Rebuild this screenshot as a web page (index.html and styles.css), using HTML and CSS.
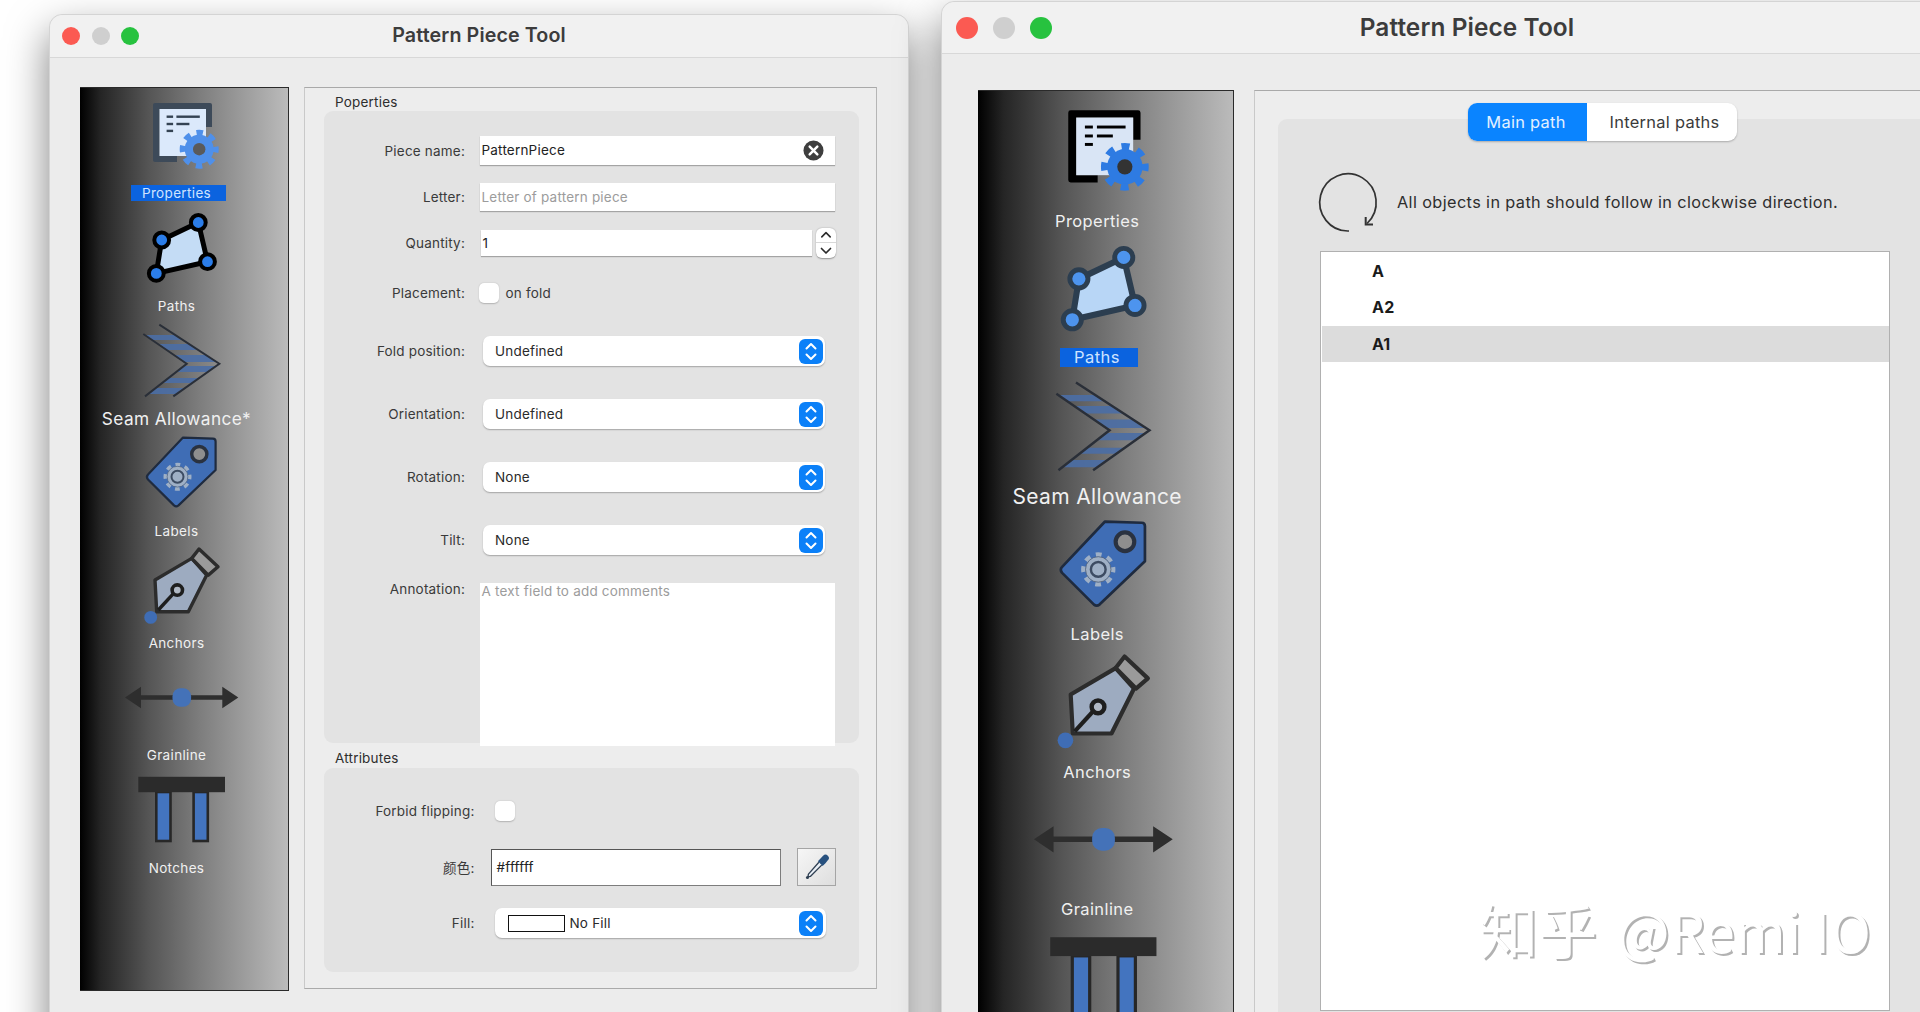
FILE: index.html
```html
<!DOCTYPE html>
<html lang="en">
<head>
<meta charset="utf-8">
<title>Pattern Piece Tool</title>
<link rel="stylesheet" href="styles.css">
</head>
<body>
<svg class="sprite" xmlns="http://www.w3.org/2000/svg">
  <symbol id="ic-props" viewBox="0 0 130 88">
    <path class="p-frame" d="M43 10H98a2 2 0 0 1 2 2V34H94V16H47.5V63H65V69H43a2 2 0 0 1-2-2V12a2 2 0 0 1 2-2Z"/>
    <rect class="p-page" x="47.5" y="16" width="46.5" height="47"/>
    <g class="p-lines">
      <rect x="54.6" y="22.5" width="6.5" height="2.4"/><rect x="64.4" y="22.5" width="23.4" height="2.4"/>
      <rect x="54.6" y="29.8" width="6.5" height="2.4"/><rect x="64.4" y="29.8" width="13" height="2.4"/>
      <rect x="54.6" y="36.7" width="6.5" height="2.4"/>
    </g>
    <circle class="p-gear" cx="87.2" cy="56.2" r="14.5"/>
    <circle class="p-teeth" cx="87.2" cy="56.2" r="16.5"/>
    <circle class="p-hole" cx="87.2" cy="56.2" r="6.2"/>
  </symbol>
  <symbol id="ic-paths" viewBox="0 0 130 88">
    <polygon class="q-shape" points="49.7,35 86.3,17.5 95.5,56.7 44.3,68.4"/>
    <g class="q-node">
      <circle cx="49.7" cy="35" r="7.4"/><circle cx="86.3" cy="17.5" r="7.4"/>
      <circle cx="95.5" cy="56.7" r="7.4"/><circle cx="44.3" cy="68.4" r="7.4"/>
    </g>
  </symbol>
  <symbol id="ic-seam" viewBox="0 0 130 88">
    <g class="s-band">
      <polygon points="33,18 63,18 71,23 40,23"/><polygon points="46,27 77,27 86,33 55,33"/>
      <polygon points="62,38 94,38 105,45 72,45"/><polygon points="72,49 104,49 96,55 64,55"/>
      <polygon points="56,61 87,61 80,66 50,66"/><polygon points="44,71 73,71 65,77 36,77"/>
    </g>
    <path class="s-line" d="M47.3 7.7 107.3 46.7 61.3 79.4M31.3 17 74.7 46.7 33 79.4"/>
  </symbol>
  <symbol id="ic-labels" viewBox="0 0 130 88">
    <path class="l-tag" d="M71 8.6 101 9.6Q103.6 9.7 103.6 12.5V41L66.5 76.4Q64.2 78.2 62 76.4L36 50.5Q33.8 47.7 36 45.6Z"/>
    <circle class="l-hole" cx="87.3" cy="25.1" r="7.6"/>
    <circle class="l-teeth" cx="65.5" cy="47.7" r="12.2"/>
    <circle class="l-gear" cx="65.5" cy="47.7" r="10.4"/>
    <circle class="l-core" cx="65.5" cy="47.7" r="6"/>
  </symbol>
  <symbol id="ic-anchors" viewBox="0 0 130 88">
    <polygon class="a-nib" points="43,38 79.7,16.4 94.7,33.1 76.3,69.8 44.7,69.8"/>
    <polygon class="a-cap" points="87,7 106,24.8 96.3,33.1 79.7,16.4"/>
    <path class="a-slit" d="M46.3 68 63 49.8"/>
    <circle class="a-eye" cx="65.3" cy="48.1" r="5.2"/>
    <circle class="a-dot" cx="38.7" cy="75.4" r="6.4"/>
  </symbol>
  <symbol id="ic-grain" viewBox="0 0 130 88">
    <path class="g-arrow" d="M13 43.5 29 32.8V41.2H110.3V32.8L126.3 43.5 110.3 54.2V45.8H29V54.2Z"/>
    <rect class="g-dot" x="60.5" y="34.2" width="18.6" height="18.6" rx="8"/>
  </symbol>
  <symbol id="ic-notch" viewBox="0 0 130 88">
    <rect class="n-leg" x="44.3" y="26" width="14.2" height="49"/>
    <rect class="n-leg" x="81.6" y="26" width="14.2" height="49"/>
    <rect class="n-bar" x="26.3" y="10.8" width="86.7" height="15.4"/>
  </symbol>
  <symbol id="ic-updown" viewBox="0 0 24 25">
    <path d="M7.5 9.5 12 5l4.5 4.5M7.5 15.5 12 20l4.5-4.5"/>
  </symbol>
</svg>

<main class="desktop">
  <section class="window window-a">
    <header class="titlebar">
      <span class="light light-red"></span><span class="light light-grey"></span><span class="light light-green"></span>
      <h1 class="title">Pattern Piece Tool</h1>
    </header>
    <div class="content">
      <nav class="sidebar">
        <div class="item selected"><svg class="icon"><use href="#ic-props"/></svg><span class="label"><span class="bar">Properties</span></span></div>
        <div class="item"><svg class="icon"><use href="#ic-paths"/></svg><span class="label">Paths</span></div>
        <div class="item"><svg class="icon"><use href="#ic-seam"/></svg><span class="label label-big">Seam Allowance*</span></div>
        <div class="item"><svg class="icon"><use href="#ic-labels"/></svg><span class="label">Labels</span></div>
        <div class="item"><svg class="icon"><use href="#ic-anchors"/></svg><span class="label">Anchors</span></div>
        <div class="item"><svg class="icon"><use href="#ic-grain"/></svg><span class="label">Grainline</span></div>
        <div class="item"><svg class="icon"><use href="#ic-notch"/></svg><span class="label">Notches</span></div>
      </nav>
      <div class="panel">
        <div class="legend">Poperties</div>
        <div class="group group-props">
          <div class="row row-name">
            <label class="lab">Piece name:</label>
            <div class="field field-wide"><span>PatternPiece</span>
              <svg class="clear" viewBox="0 0 22 22"><circle cx="11" cy="11" r="10.5"/><path d="M7 7l8 8M15 7l-8 8"/></svg>
            </div>
          </div>
          <div class="row row-letter">
            <label class="lab">Letter:</label>
            <div class="field field-wide field-letter ph">Letter of pattern piece</div>
          </div>
          <div class="row row-qty">
            <label class="lab">Quantity:</label>
            <div class="field field-qty">1</div>
            <div class="stepper">
              <svg viewBox="0 0 20 15"><path d="M5.5 9.5 10 5l4.5 4.5"/></svg>
              <svg viewBox="0 0 20 15"><path d="M5.5 5.5 10 10l4.5-4.5"/></svg>
            </div>
          </div>
          <div class="row row-place">
            <label class="lab">Placement:</label>
            <span class="check check-fold"></span><span class="on-fold">on fold</span>
          </div>
          <div class="row row-select row-first">
            <label class="lab">Fold position:</label>
            <div class="select"><span>Undefined</span><span class="sel-btn"><svg><use href="#ic-updown"/></svg></span></div>
          </div>
          <div class="row row-select">
            <label class="lab">Orientation:</label>
            <div class="select"><span>Undefined</span><span class="sel-btn"><svg><use href="#ic-updown"/></svg></span></div>
          </div>
          <div class="row row-select">
            <label class="lab">Rotation:</label>
            <div class="select"><span>None</span><span class="sel-btn"><svg><use href="#ic-updown"/></svg></span></div>
          </div>
          <div class="row row-select">
            <label class="lab">Tilt:</label>
            <div class="select"><span>None</span><span class="sel-btn"><svg><use href="#ic-updown"/></svg></span></div>
          </div>
          <div class="row row-note">
            <label class="lab">Annotation:</label>
            <div class="note ph">A text field to add comments</div>
          </div>
        </div>
        <div class="legend legend-attr">Attributes</div>
        <div class="group group-attr">
          <div class="row row-flip">
            <label class="lab lab-attr">Forbid flipping:</label>
            <span class="check check-flip"></span>
          </div>
          <div class="row row-color">
            <label class="lab lab-attr">颜色:</label>
            <div class="color-input">#ffffff</div>
            <div class="dropper">
              <svg viewBox="0 0 38 38"><path class="drop-glass" d="M22 14 11 26.5 10.5 29.5 13 29 25 17"/><path class="drop-bulb" d="M21 13 26 18 29 15 31.5 12a2.6 2.6 0 0 0-5-5Z"/><circle class="drop-tip" cx="10" cy="30" r="1.6"/></svg>
            </div>
          </div>
          <div class="row row-fill">
            <label class="lab lab-attr">Fill:</label>
            <div class="select select-fill"><span class="swatch"></span><span class="fill-text">No Fill</span><span class="sel-btn"><svg><use href="#ic-updown"/></svg></span></div>
          </div>
        </div>
      </div>
    </div>
  </section>

  <section class="window window-b">
    <header class="titlebar">
      <span class="light light-red"></span><span class="light light-grey"></span><span class="light light-green"></span>
      <h1 class="title">Pattern Piece Tool</h1>
    </header>
    <div class="content">
      <nav class="sidebar">
        <div class="item"><svg class="icon"><use href="#ic-props"/></svg><span class="label">Properties</span></div>
        <div class="item selected"><svg class="icon"><use href="#ic-paths"/></svg><span class="label"><span class="bar">Paths</span></span></div>
        <div class="item"><svg class="icon"><use href="#ic-seam"/></svg><span class="label label-big">Seam Allowance</span></div>
        <div class="item"><svg class="icon"><use href="#ic-labels"/></svg><span class="label">Labels</span></div>
        <div class="item"><svg class="icon"><use href="#ic-anchors"/></svg><span class="label">Anchors</span></div>
        <div class="item"><svg class="icon"><use href="#ic-grain"/></svg><span class="label">Grainline</span></div>
        <div class="item"><svg class="icon"><use href="#ic-notch"/></svg></div>
      </nav>
      <div class="panel">
        <div class="group group-path">
          <div class="tabs"><span class="tab tab-on">Main path</span><span class="tab tab-off">Internal paths</span></div>
          <div class="hint">
            <svg class="cw" viewBox="0 0 58 59"><path d="M29 58A28.2 28.6 0 1 1 47 50.5"/><path d="M45.7 44V51.5H53" class="cw-head"/></svg>
            <span>All objects in path should follow in clockwise direction.</span>
          </div>
          <div class="list">
            <div class="list-row">A</div>
            <div class="list-row">A2</div>
            <div class="list-row list-row-on">A1</div>
            <div class="mark"><span class="mark-cn" data-text="知乎">知乎</span><span class="mark-en" data-text="@Remi IO">@Remi IO</span></div>
          </div>
        </div>
      </div>
    </div>
  </section>
</main>
</body>
</html>
```

FILE: styles.css
```css
* { box-sizing: border-box; }
html, body { margin: 0; height: 1012px; overflow: hidden; background: #fff; }
body {
  font-family: Inter, "Noto Sans CJK SC", "Liberation Sans", sans-serif;
  font-size: 13.5px;
  letter-spacing: 0.2px;
  color: #3a3a3a;
}
.sprite { display: none; }
.desktop { position: relative; width: 1920px; height: 1012px; overflow: hidden; }

/* Windows on the desktop */
.window {
  position: absolute;
  background: #ececec;
  border: 1px solid #d4d4d4;
  border-radius: 13px 13px 0 0;
  box-shadow: 0 18px 42px rgba(0, 0, 0, 0.5);
}
.window-a { left: 49px; top: 14px; width: 860px; height: 1060px; }
.window-b { left: 941px; top: 1px; width: 1100px; height: 1080px; }

.titlebar {
  display: flex;
  align-items: center;
  position: relative;
  background: #f1f1f1;
  border-bottom: 1px solid #d8d8d8;
  border-radius: 13px 13px 0 0;
}
.window-a .titlebar { height: 43px; padding-left: 12px; gap: 11.5px; }
.window-b .titlebar { height: 52px; padding-left: 14px; gap: 15px; }
.light { border-radius: 50%; flex: none; }
.window-a .light { width: 18px; height: 18px; }
.window-b .light { width: 22px; height: 22px; }
.light-red { background: #fb5a52; }
.light-grey { background: #cfcfcf; }
.light-green { background: #27c23f; }
.title {
  position: absolute;
  margin: 0;
  font-weight: 600;
  color: #3c3c3c;
  white-space: nowrap;
  transform: translate(-50%, -1px);
}
.window-a .title { left: 429px; font-size: 19.7px; letter-spacing: 0.1px; }
.window-b .title { left: 525px; font-size: 24.4px; letter-spacing: 0.1px; }

.content { display: flex; }
.window-a .content { padding: 29px 0 0 30px; gap: 15px; }
.window-b .content { padding: 36px 0 0 36px; gap: 20px; }

/* Sidebar */
.sidebar {
  flex: none;
  display: flex;
  flex-direction: column;
  background: linear-gradient(90deg, #000 0%, #252525 10%, #555 33%, #7e7e7e 58%, #bbb 100%);
  border: 1px solid #2a2a2a;
  border-width: 1.5px 1.5px 1.5px 0;
}
.window-a .sidebar { width: 209px; height: 904px; padding: 4.5px 15px 0 0; }
.window-b .sidebar { width: 256px; height: 1000px; padding: 7px 16.6px 0 0; }
.item { display: flex; flex-direction: column; align-items: center; flex: none; }
.window-a .item { height: 112.3px; }
.window-b .item { height: 137.6px; }
.icon { display: block; flex: none; }
.window-a .icon { width: 130px; height: 88px; }
.window-b .icon { width: 159.3px; height: 107.8px; }
.label { display: block; color: #f0f0f0; white-space: nowrap; text-align: center; padding-top: 1.5px; }
.window-a .label { height: 24.3px; line-height: 24.3px; font-size: 13.5px; letter-spacing: 0.35px; }
.window-b .label { height: 29.8px; line-height: 29.8px; font-size: 16.5px; letter-spacing: 0.4px; }
.window-a .label-big { font-size: 17.3px; letter-spacing: 0.35px; }
.window-b .label-big { font-size: 21px; letter-spacing: 0.35px; }
.item.selected .label { padding-top: 0; }
.bar { display: inline-block; background: #0b63df; color: #cfe4ff; }
.window-a .bar { width: 95px; height: 16px; line-height: 16px; margin-left: 4px; padding-right: 4px; }
.window-b .bar { width: 78px; height: 19px; line-height: 19px; margin-left: 3.5px; padding-right: 4px; }

/* Icon colours, unselected by default */
.item {
  --frame: #000; --page: #d9e5f5; --line: #000; --gear: #2e7be2; --hole: #333;
  --edge: #000; --shape: #c4dcf5; --node: #2b7de9;
}
.window-a .item.selected, .window-b .item.selected {
  --frame: #344353; --page: #dbe9fb; --line: #344353; --gear: #4f90ea; --hole: #5a5a5a;
  --edge: #2c3e50; --shape: #b8d6f6; --node: #4d94ee;
}
.window-a .item.selected { --frame: #3d4a59; }
.p-frame { fill: var(--frame); }
.p-page { fill: var(--page); }
.p-lines { fill: var(--line); }
.p-gear { fill: var(--gear); }
.p-teeth { fill: none; stroke: var(--gear); stroke-width: 6; stroke-dasharray: 6.5 6.46; stroke-dashoffset: 3.25; }
.p-hole { fill: var(--hole); }
.q-shape { fill: var(--shape); stroke: var(--edge); stroke-width: 5; stroke-linejoin: round; }
.q-node circle { fill: var(--node); stroke: var(--edge); stroke-width: 4; }
.s-band { fill: #4b6ea6; opacity: 0.9; }
.s-line { fill: none; stroke: #2a2f38; stroke-width: 2; }
.l-tag { fill: #3f6db5; stroke: #1f2b3f; stroke-width: 2.2; stroke-linejoin: round; }
.l-hole { fill: #8e8e8e; stroke: #2a3240; stroke-width: 3.4; }
.l-teeth { fill: none; stroke: #9fb0c6; stroke-width: 3.6; stroke-dasharray: 4.8 4.78; stroke-dashoffset: 2.4; }
.l-gear { fill: #9fb0c6; stroke: #4a5a72; stroke-width: 0.6; }
.l-core { fill: #9fb0c6; stroke: #3d4c63; stroke-width: 2; }
.a-nib { fill: #9dabc0; stroke: #2c2c2c; stroke-width: 3.4; stroke-linejoin: round; }
.a-cap { fill: #9a9a9a; stroke: #2c2c2c; stroke-width: 3.4; stroke-linejoin: round; }
.a-slit { fill: none; stroke: #1e1e1e; stroke-width: 3.4; }
.a-eye { fill: #b0b8c4; stroke: #1e1e1e; stroke-width: 3.6; }
.a-dot { fill: #3f6db5; }
.g-arrow { fill: #2e2e2e; }
.g-dot { fill: #4472b8; }
.n-leg { fill: #4374bf; stroke: #272727; stroke-width: 2.6; }
.n-bar { fill: #2b2b2b; }

/* Panels and groups */
.panel {
  flex: none;
  background: #ededed;
  border: 1px solid #c9c9c9;
  border-top-color: #a9a9a9;
  border-right-color: #b5b5b5;
  border-bottom-color: #aaa;
}
.window-a .panel { width: 572.5px; height: 902px; padding: 0 17px 0 19px; }
.window-b .panel { width: 900px; height: 1000px; padding: 28px 0 0 23px; }
.legend { height: 23px; line-height: 29px; padding-left: 11px; color: #2e2e2e; }
.legend-attr { height: 25px; line-height: 31px; }
.group { background: #e3e3e3; border-radius: 9px; }
.group-props { height: 632px; padding-top: 25px; }
.group-attr { height: 204px; padding-top: 33px; }
.group-path { display: flow-root; width: 900px; height: 1000px; }

.row { display: flex; align-items: center; }
.lab { flex: none; width: 141px; text-align: right; white-space: nowrap; padding-top: 0.5px; }
.lab-attr { width: 150.5px; }
.row-name { height: 29px; }
.row-letter { height: 28px; margin-top: 18px; }
.row-qty { height: 30px; margin-top: 17px; }
.row-place { height: 20px; margin-top: 25px; }
.row-select { height: 30px; margin-top: 33px; }
.row-note { align-items: flex-start; margin-top: 28px; }
.row-note .lab { line-height: 13px; padding-top: 0; }

.field {
  display: flex;
  align-items: center;
  justify-content: space-between;
  background: #fff;
  color: #222;
  box-shadow: 0 1px 1px rgba(0, 0, 0, 0.28);
  padding-left: 1.5px;
  padding-bottom: 1px;
}
.field-wide { width: 355px; height: 29px; margin-left: 15px; padding-right: 11px; }
.field-letter { height: 28px; padding-bottom: 0; }
.field-qty { width: 331px; height: 25.5px; margin-left: 16px; padding-bottom: 0; }
.ph { color: #9c9c9c; }
.field.ph { color: #9c9c9c; }
.clear { width: 21px; height: 21px; flex: none; }
.clear circle { fill: #3e3e3e; }
.clear path { stroke: #fff; stroke-width: 2.6; stroke-linecap: round; fill: none; }
.stepper {
  width: 20px;
  height: 30px;
  margin-left: 4px;
  background: #fff;
  border-radius: 6px;
  box-shadow: 0 0.5px 1.5px rgba(0, 0, 0, 0.35);
}
.stepper svg { display: block; width: 20px; height: 15px; }
.stepper svg:first-child { border-bottom: 1px solid #d8d8d8; }
.stepper path { fill: none; stroke: #2a2a2a; stroke-width: 1.7; stroke-linecap: round; stroke-linejoin: round; }
.check {
  flex: none;
  width: 20px;
  height: 20px;
  background: #fff;
  border-radius: 5px;
  box-shadow: 0 0.5px 1.5px rgba(0, 0, 0, 0.22);
}
.check-fold { margin-left: 14px; }
.check-flip { margin-left: 20px; }
.on-fold { margin-left: 6.5px; }

.select {
  display: flex;
  align-items: center;
  justify-content: space-between;
  width: 342px;
  height: 30px;
  margin-left: 18px;
  padding: 0 2.5px 0 12px;
  background: #fff;
  color: #2a2a2a;
  border-radius: 7px;
  box-shadow: 0 1px 1.5px rgba(0, 0, 0, 0.28);
}
.sel-btn {
  flex: none;
  width: 24px;
  height: 25px;
  background: #0b80f8;
  border-radius: 6px;
}
.sel-btn svg { display: block; width: 24px; height: 25px; }
.sel-btn svg { fill: none; stroke: #fff; stroke-width: 2; stroke-linecap: round; stroke-linejoin: round; }

.note {
  width: 355px;
  height: 163px;
  margin-left: 15px;
  padding: 1px 0 0 1.5px;
  background: #fff;
  line-height: 14px;
}

.row-flip { height: 20px; }
.row-color { height: 38px; margin-top: 27px; }
.row-fill { height: 30px; margin-top: 22px; }
.color-input {
  width: 290px;
  height: 37px;
  margin-left: 16px;
  padding-left: 5px;
  line-height: 34px;
  background: #fff;
  color: #222;
  border: 1.5px solid #7d7d7d;
  border-top-color: #555;
  border-left-color: #555;
}
.dropper {
  width: 38.5px;
  height: 38px;
  margin-left: 16.5px;
  background: linear-gradient(135deg, #f6f6f6, #dedede);
  border: 1px solid #a5a5a5;
}
.dropper svg { display: block; width: 36px; height: 36px; }
.drop-glass { fill: #e8eef5; stroke: #2f3f52; stroke-width: 1.4; stroke-linejoin: round; }
.drop-bulb { fill: #27517f; }
.drop-tip { fill: #2f3f52; }
.select-fill { width: 331px; margin-left: 20px; padding-left: 13px; justify-content: flex-start; }
.swatch { flex: none; width: 57px; height: 17px; background: #fff; border: 1.5px solid #111; }
.fill-text { margin-left: 5px; }
.select-fill .sel-btn { margin-left: auto; }

/* Path tab */
.tabs {
  display: flex;
  width: 269px;
  height: 38px;
  margin: -16px 0 0 190px;
  background: #fff;
  border-radius: 9px;
  box-shadow: 0 1px 2px rgba(0, 0, 0, 0.25);
  font-size: 16.4px;
  letter-spacing: 0.3px;
}
.tab { display: flex; align-items: center; justify-content: center; color: #3a3a3a; flex: 1; }
.tab-off { padding-left: 5px; }
.tab-on { flex: none; width: 119px; padding-right: 3px; background: #0a84ff; color: #e4f1ff; border-radius: 9px 0 0 9px; }
.hint { display: flex; align-items: center; margin: 31.5px 0 0 42px; font-size: 16.3px; letter-spacing: 0.38px; color: #2e2e2e; }
.hint span { margin-left: 19px; }
.cw { flex: none; width: 58px; height: 59px; overflow: visible; }
.cw path { fill: none; stroke: #333; stroke-width: 1.7; }
.cw .cw-head { stroke-width: 2; }
.list {
  position: relative;
  width: 570px;
  height: 760px;
  margin: 19px 0 0 42px;
  padding: 1.5px 0 0 1px;
  background: #fff;
  border: 1px solid #b0b0b0;
}
.list-row { height: 36.4px; line-height: 36.4px; padding-left: 50px; font-size: 16px; font-weight: 700; color: #1a1a1a; }
.list-row-on { background: #dcdcdc; }
.mark {
  position: absolute;
  left: 160px;
  top: 644px;
  display: flex;
  gap: 20px;
  font-family: "Noto Sans CJK SC", "Noto Sans", sans-serif;
  font-weight: 400;
  line-height: 70px;
  white-space: nowrap;
  color: #b2b2b2;
}
.mark-cn { position: relative; font-size: 59px; }
.mark-en { position: relative; font-size: 55px; }
.mark-cn::after, .mark-en::after {
  content: attr(data-text);
  position: absolute;
  left: -2px;
  top: -2px;
  color: #fff;
}
```
